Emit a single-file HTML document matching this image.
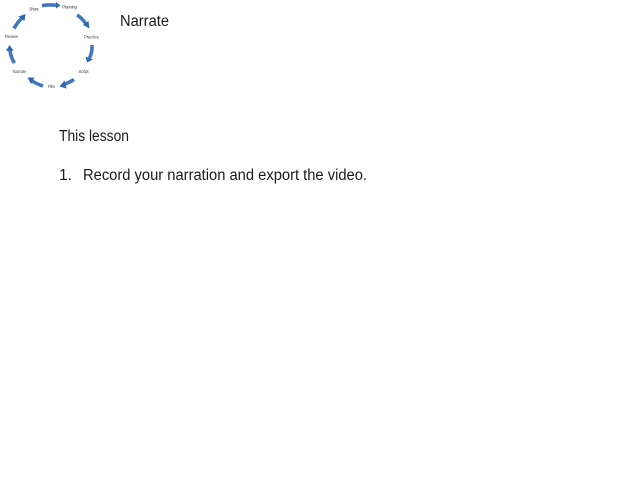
<!DOCTYPE html>
<html>
<head>
<meta charset="utf-8">
<style>
html,body{margin:0;padding:0;background:#fff;width:638px;height:478px;overflow:hidden}
svg{display:block}
text{font-family:"Liberation Sans",sans-serif;fill:#1a1a1a}
.s{font-size:4.2px;fill:#444}
.a{fill:none;stroke:#3f78bd;stroke-width:3.6;stroke-linecap:butt}
.h{fill:#2f68ad}
.g{filter:blur(.35px)}
</style>
</head>
<body>
<svg width="638" height="478" viewBox="0 0 638 478" xmlns="http://www.w3.org/2000/svg">
<g class="g">
<path class="a" d="M42 5.5Q50 4.5 56 5.2"/>
<path class="h" d="M56 2L60.5 5.5L56 8.5Z"/>
<path class="a" d="M77 15Q82 18 86 24"/>
<path class="h" d="M83 25L89.5 28.5L88.5 21Z"/>
<path class="a" d="M92 45Q92.5 52 89.5 58"/>
<path class="h" d="M85.5 56.5L87 62.5L93 59.5Z"/>
<path class="a" d="M74 79.5Q70 82 64 84.5"/>
<path class="h" d="M64.5 80.5L59.5 86.5L66.5 88.5Z"/>
<path class="a" d="M43 86Q38 84.5 32 81"/>
<path class="h" d="M34.5 77.5L27.5 77.5L31 84Z"/>
<path class="a" d="M14.5 63Q10.5 57 10 50"/>
<path class="h" d="M6 51L9.5 45L13.5 50.5Z"/>
<path class="a" d="M14 28.5Q17 23 22 18"/>
<path class="h" d="M18.5 16.5L25.5 14L24.5 21Z"/>
<text class="s" x="29" y="10.5" textLength="10">Share</text>
<text class="s" x="62" y="8.5" textLength="15">Planning</text>
<text class="s" x="5" y="38" textLength="13">Review</text>
<text class="s" x="84" y="38.5" textLength="15">Practice</text>
<text class="s" x="12.5" y="73" textLength="14">Narrate</text>
<text class="s" x="78.5" y="73" textLength="10">Script</text>
<text class="s" x="48" y="88" textLength="7">Film</text>
</g>
<text x="120" y="26" font-size="15.5" textLength="49" lengthAdjust="spacingAndGlyphs">Narrate</text>
<text x="59" y="141" font-size="15.5" textLength="70" lengthAdjust="spacingAndGlyphs">This lesson</text>
<text x="59" y="180" font-size="15.5" textLength="13" lengthAdjust="spacingAndGlyphs">1.</text>
<text x="83" y="180" font-size="15.5" textLength="284" lengthAdjust="spacingAndGlyphs">Record your narration and export the video.</text>
</svg>
</body>
</html>
